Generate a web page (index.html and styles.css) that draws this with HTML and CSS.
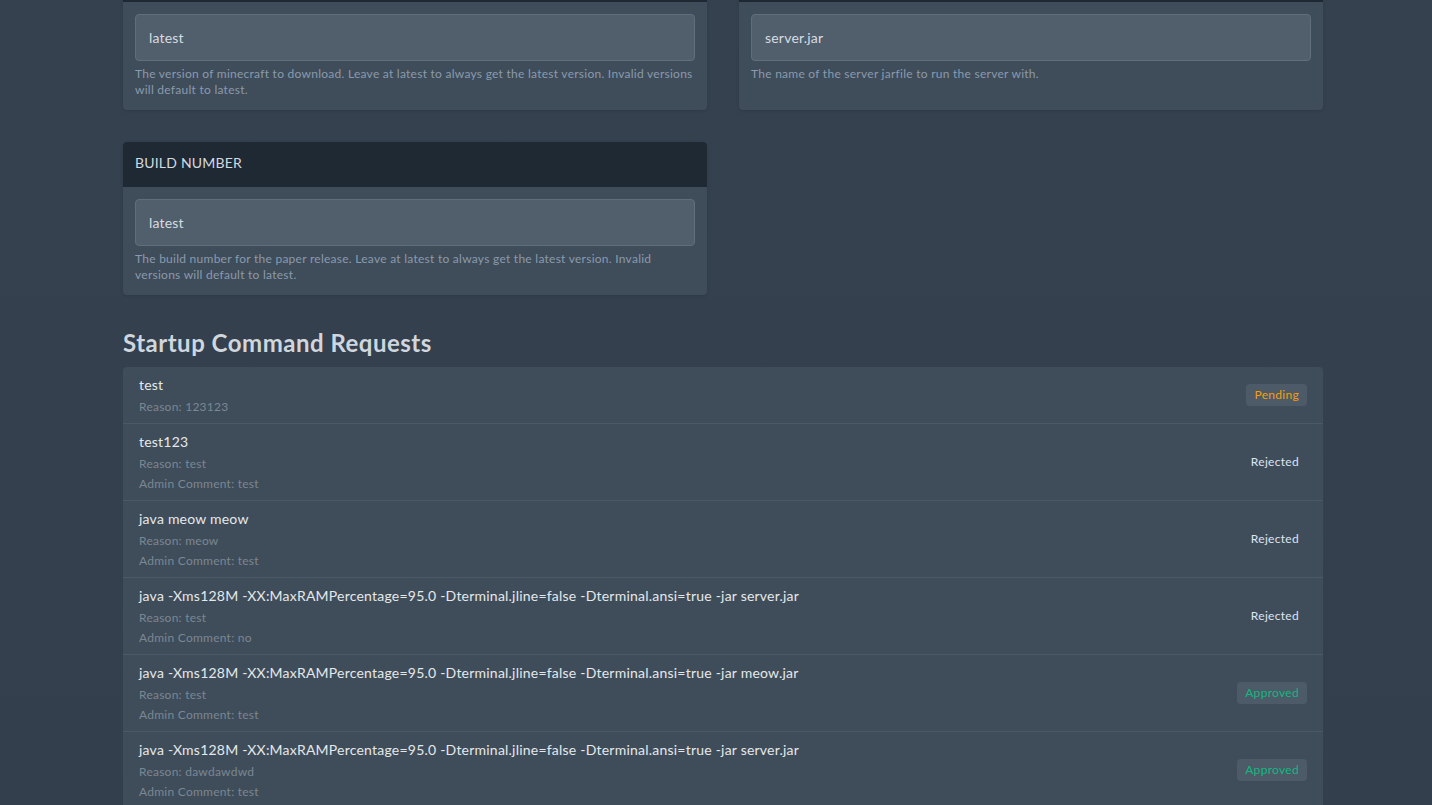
FILE: index.html
```html
<!DOCTYPE html>
<html lang="en">
<head>
<meta charset="utf-8">
<title>Startup</title>
<link rel="stylesheet" href="styles.css">
</head>
<body>
<div class="page">
  <div class="vars">
    <div class="card">
      <div class="card-head">MINECRAFT VERSION</div>
      <div class="card-body">
        <div class="input">latest</div>
        <p class="help">The version of minecraft to download. Leave at latest to always get the latest version. Invalid versions will default to latest.</p>
      </div>
    </div>
    <div class="card">
      <div class="card-head">SERVER JAR FILE</div>
      <div class="card-body">
        <div class="input">server.jar</div>
        <p class="help">The name of the server jarfile to run the server with.</p>
      </div>
    </div>
    <div class="card">
      <div class="card-head">BUILD NUMBER</div>
      <div class="card-body">
        <div class="input">latest</div>
        <p class="help">The build number for the paper release. Leave at latest to always get the latest version. Invalid versions will default to latest.</p>
      </div>
    </div>
  </div>

  <h2 class="section-title">Startup Command Requests</h2>
  <div class="requests">
    <div class="req">
      <div class="req-info">
        <div class="req-cmd">test</div>
        <div class="req-meta">Reason: 123123</div>
      </div>
      <span class="badge pending">Pending</span>
    </div>
    <div class="req">
      <div class="req-info">
        <div class="req-cmd">test123</div>
        <div class="req-meta">Reason: test</div>
        <div class="req-meta">Admin Comment: test</div>
      </div>
      <span class="badge rejected">Rejected</span>
    </div>
    <div class="req">
      <div class="req-info">
        <div class="req-cmd">java meow meow</div>
        <div class="req-meta">Reason: meow</div>
        <div class="req-meta">Admin Comment: test</div>
      </div>
      <span class="badge rejected">Rejected</span>
    </div>
    <div class="req">
      <div class="req-info">
        <div class="req-cmd">java -Xms128M -XX:MaxRAMPercentage=95.0 -Dterminal.jline=false -Dterminal.ansi=true -jar server.jar</div>
        <div class="req-meta">Reason: test</div>
        <div class="req-meta">Admin Comment: no</div>
      </div>
      <span class="badge rejected">Rejected</span>
    </div>
    <div class="req">
      <div class="req-info">
        <div class="req-cmd">java -Xms128M -XX:MaxRAMPercentage=95.0 -Dterminal.jline=false -Dterminal.ansi=true -jar meow.jar</div>
        <div class="req-meta">Reason: test</div>
        <div class="req-meta">Admin Comment: test</div>
      </div>
      <span class="badge approved">Approved</span>
    </div>
    <div class="req">
      <div class="req-info">
        <div class="req-cmd">java -Xms128M -XX:MaxRAMPercentage=95.0 -Dterminal.jline=false -Dterminal.ansi=true -jar server.jar</div>
        <div class="req-meta">Reason: dawdawdwd</div>
        <div class="req-meta">Admin Comment: test</div>
      </div>
      <span class="badge approved">Approved</span>
    </div>
  </div>
</div>
</body>
</html>
```

FILE: styles.css
```css
* { box-sizing: border-box; }
html, body {
  margin: 0;
  padding: 0;
  height: 805px;
  overflow: hidden;
}
body {
  background: linear-gradient(180deg, #35414f 0%, #333f4c 100%);
  font-family: Lato, "Noto Sans", sans-serif;
  color: #cad1d8;
}
.page {
  width: 1200px;
  margin: -43px 0 0 123px;
}
.vars {
  display: grid;
  grid-template-columns: 1fr 1fr;
  column-gap: 32px;
  row-gap: 32px;
}
.card {
  background: #3f4d5a;
  border-radius: 4px;
  overflow: hidden;
  box-shadow: 0 1px 3px rgba(0,0,0,0.12);
}
.card-head {
  background: #1f2933;
  color: #d3dae1;
  font-size: 14px;
  line-height: 21px;
  padding: 10px 12px 14px;
  letter-spacing: 0.2px;
}
.card-body {
  padding: 12px;
}
.input {
  height: 47px;
  border: 1px solid #606d7b;
  background: #515f6c;
  border-radius: 4px;
  padding: 0 13px;
  display: flex;
  align-items: center;
  font-size: 14px;
  color: #d6dce2;
  letter-spacing: 0.2px;
}
.help {
  margin: 5px 0 0;
  font-size: 12px;
  line-height: 16px;
  color: #8a9aad;
  letter-spacing: 0.26px;
}
.section-title {
  margin: 32px 0 8px;
  font-size: 24px;
  line-height: 32px;
  font-weight: 700;
  color: #cfd6dd;
  letter-spacing: 0.5px;
}
.requests {
  background: #3f4d5a;
  border-radius: 4px;
  overflow: hidden;
}
.req {
  display: flex;
  align-items: center;
  justify-content: space-between;
  padding: 8px 16px;
  border-bottom: 1px solid #4b5866;
}
.req-cmd {
  font-size: 14px;
  line-height: 20px;
  color: #e5e8eb;
  letter-spacing: 0.22px;
}
.req-meta {
  margin-top: 4px;
  font-size: 12px;
  line-height: 16px;
  color: #7b8793;
  letter-spacing: 0.25px;
}
.badge {
  font-size: 12px;
  line-height: 16px;
  padding: 3px 8px;
  border-radius: 4px;
  letter-spacing: 0.3px;
}
.pending { background: #4d5a68; color: #f59e0b; }
.approved { background: #4d5a68; color: #10b981; }
.rejected { color: #dfe3f2; }
```
